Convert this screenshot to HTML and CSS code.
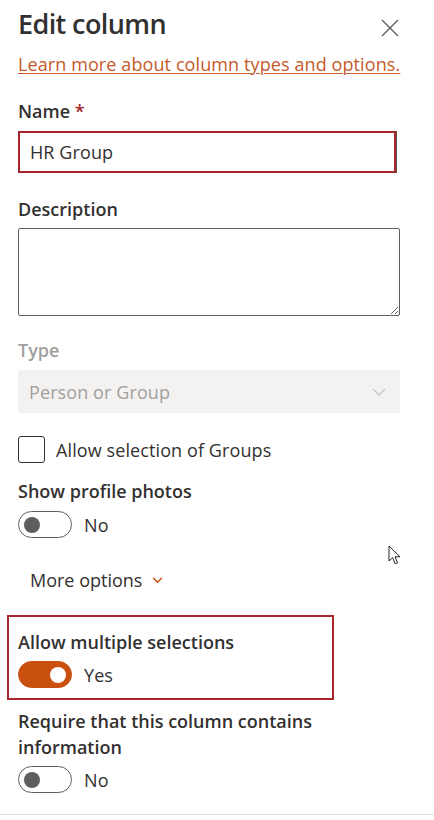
FILE: index.html
```html
<!DOCTYPE html>
<html lang="en">
<head>
<meta charset="utf-8" />
<meta name="viewport" content="width=device-width, initial-scale=1" />
<title>Edit column</title>
<link rel="stylesheet" href="styles.css">
</head>
<body>
<div class="panel">
  <!-- Kopf -->
  <div class="head">
    <h1 class="title">Edit column</h1>
    <button class="close" aria-label="Close">
      <svg viewBox="0 0 18 18" width="18" height="18"><path d="M1 1L17 17M17 1L1 17" stroke="#605e5c" stroke-width="1.4" fill="none"/></svg>
    </button>
  </div>
  <a class="learn" href="#">Learn more about column types and options.</a>

  <!-- Name -->
  <div class="label label-name">Name <span class="req">*</span></div>
  <div class="input input-hl">HR Group</div>

  <!-- Beschreibung -->
  <div class="label label-desc">Description</div>
  <textarea class="textarea"></textarea>

  <!-- Typ -->
  <div class="label label-type is-disabled">Type</div>
  <div class="dropdown">
    <span>Person or Group</span>
    <svg viewBox="0 0 14 8" width="14" height="8"><path d="M1 1L7 7L13 1" stroke="#c8c6c4" stroke-width="1.2" fill="none"/></svg>
  </div>

  <label class="check-row">
    <span class="checkbox"></span>
    <span>Allow selection of Groups</span>
  </label>

  <div class="label label-photos">Show profile photos</div>
  <div class="toggle-row">
    <span class="toggle"><span class="knob"></span></span>
    <span>No</span>
  </div>

  <button class="more">More options
    <svg viewBox="0 0 12 8" width="11" height="7"><path d="M1.5 1.5L6 6L10.5 1.5" stroke="#ca5010" stroke-width="1.8" fill="none" stroke-linecap="round" stroke-linejoin="round"/></svg>
  </button>

  <!-- markierter Bereich -->
  <div class="highlight">
    <div class="label">Allow multiple selections</div>
    <div class="toggle-row">
      <span class="toggle is-on"><span class="knob"></span></span>
      <span>Yes</span>
    </div>
  </div>

  <div class="label label-req">Require that this column contains information</div>
  <div class="toggle-row">
    <span class="toggle"><span class="knob"></span></span>
    <span>No</span>
  </div>
</div>
<div class="footer"></div>

<!-- Mauszeiger -->
<svg class="cursor" viewBox="0 0 14 21" width="14" height="21"><path d="M1 1L1 16L4.6 12.6L7.2 18.8L9.6 17.8L7 11.8L12 11.8Z" fill="#fff" stroke="#222" stroke-width="1" stroke-linejoin="round"/></svg>
</body>
</html>
```

FILE: styles.css
```css
:root{--fg:#323130;--muted:#a19f9d;--accent:#ca5010;--mark:#a8262c;--line:#605e5c}
html,body{margin:0;background:#fff;color:var(--fg);font-family:"Open Sans",Roboto,Arial,sans-serif;font-size:18px}
body{width:434px;height:820px;overflow:hidden;position:relative;letter-spacing:.1px}

.panel{padding:6px 34px 0 18px;display:flex;flex-direction:column;align-items:flex-start}

/* Kopf */
.head{display:flex;justify-content:space-between;align-items:center;width:100%;height:36px}
.title{margin:0;font-size:27px;line-height:36px;font-weight:600;letter-spacing:-.6px}
.close{border:0;background:none;padding:0;width:18px;height:18px;margin-right:1px;margin-top:7px}
.close svg{display:block}
.learn{margin-top:9px;line-height:26px;color:#c55a2a;text-decoration:underline;text-underline-offset:2px;text-decoration-thickness:1px;letter-spacing:.1px;white-space:nowrap}

/* Labels */
.label{font-weight:600;line-height:26px;letter-spacing:0}
.label-name{margin-top:21px}
.label-desc{margin-top:23px}
.label-type{margin-top:21px}
.label-photos{margin-top:15px}
.label-req{margin-top:8px;width:340px}
.req{color:#a4262c}
.is-disabled{color:var(--muted)}

/* Felder */
.input{box-sizing:border-box;margin-top:7px;width:378px;height:42px;padding:0 10px;display:flex;align-items:center;border:2px solid var(--mark);box-shadow:1px 0 0 #555}
.textarea{box-sizing:border-box;display:block;margin:6px 0 0;width:382px;height:88px;border:1px solid var(--line);border-radius:2px;font:inherit;resize:vertical;outline:0}
.dropdown{box-sizing:border-box;margin-top:7px;width:382px;height:43px;padding:0 14px 0 11px;background:#f3f2f1;color:var(--muted);display:flex;align-items:center;justify-content:space-between;border-radius:2px}

.check-row{margin-top:23px;display:flex;align-items:center;gap:11px;height:27px}
.checkbox{box-sizing:border-box;width:27px;height:27px;border:1px solid var(--fg);border-radius:3px}

/* Schalter */
.toggle-row{margin-top:7px;display:flex;align-items:center;gap:12px;height:27px}
.toggle{box-sizing:border-box;width:54px;height:27px;border:1px solid var(--line);border-radius:14px;display:flex;align-items:center;padding:0 5px}
.knob{width:16px;height:16px;border-radius:50%;background:var(--line)}
.toggle.is-on{background:var(--accent);border-color:var(--accent);justify-content:flex-end}
.toggle.is-on .knob{background:#fff}

.more{margin-top:29px;margin-left:12px;border:0;background:none;padding:0;font:inherit;color:var(--fg);line-height:26px;display:flex;align-items:center;gap:10px}

/* roter Rahmen */
.highlight{box-sizing:border-box;margin-top:22px;margin-left:-11px;width:327px;padding:12px 0 10px 9px;border:2px solid var(--mark)}
.highlight .toggle-row{margin-top:6px}

.label-req + .toggle-row{margin-top:6px}

.footer{position:absolute;left:0;right:0;top:814px;border-top:1px solid #e1dfdd}
.cursor{position:absolute;left:388px;top:545px}
```
